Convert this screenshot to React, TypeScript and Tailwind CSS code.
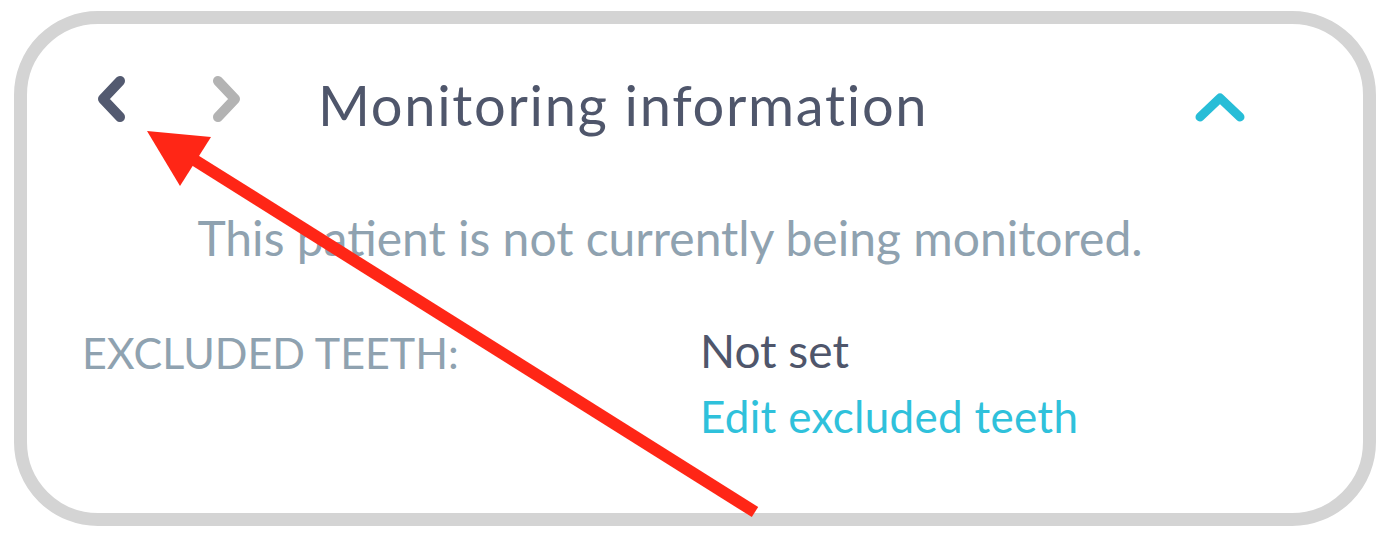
import React from 'react';

const font = { fontFamily: 'Lato, "Open Sans", sans-serif' };

const ChevronLeft: React.FC<{ color: string }> = ({ color }) => (
  <svg width="30" height="46" viewBox="0 0 30 46" fill="none">
    <path d="M24 5 L7 23 L24 41" stroke={color} strokeWidth="10" strokeLinecap="round" strokeLinejoin="round" />
  </svg>
);

const ChevronRight: React.FC<{ color: string }> = ({ color }) => (
  <svg width="30" height="46" viewBox="0 0 30 46" fill="none">
    <path d="M6 5 L23 23 L6 41" stroke={color} strokeWidth="10" strokeLinecap="round" strokeLinejoin="round" />
  </svg>
);

const ChevronUp: React.FC = () => (
  <svg width="50" height="32" viewBox="0 0 50 32" fill="none">
    <path d="M5 26 L25 7 L45 26" stroke="#27bdd7" strokeWidth="9" strokeLinecap="round" strokeLinejoin="round" />
  </svg>
);

// red annotation arrow drawn over the card
const Arrow: React.FC = () => (
  <svg className="absolute inset-0 pointer-events-none" width="1396" height="548" viewBox="0 0 1396 548">
    <line x1="188" y1="156" x2="755" y2="512" stroke="#ff2616" strokeWidth="12" />
    <polygon points="147,131 211,137 180,186" fill="#ff2616" />
  </svg>
);

export default function App() {
  return (
    <div className="relative w-[1396px] h-[548px] bg-white overflow-hidden" style={font}>
      <div className="pt-[11px] pl-[14px]">
        <div className="w-[1362px] h-[515px] rounded-[84px] border-[13px] border-[#d4d4d4] bg-white">
          {/* header */}
          <div className="flex items-center h-[150px] pl-[69px] pr-[118px]">
            <button className="flex">
              <ChevronLeft color="#535a70" />
            </button>
            <button className="flex ml-[86px]">
              <ChevronRight color="#b3b3b3" />
            </button>
            <h1 className="ml-[76px] mt-[12px] text-[56px] leading-none text-[#4f566b] tracking-[1.7px]">
              Monitoring information
            </h1>
            <button className="flex ml-auto mt-[16px]">
              <ChevronUp />
            </button>
          </div>

          <p className="mt-[40px] pr-[50px] text-center text-[48px] leading-none text-[#8fa2b0]">
            This patient is not currently being monitored.
          </p>

          <div className="flex mt-[66px] pl-[55px]">
            <div className="w-[618px] text-[43px] leading-none text-[#8fa2b0] pt-[3px]">EXCLUDED TEETH:</div>
            <div className="flex flex-col gap-[20px]">
              <span className="text-[46px] leading-none text-[#4f566b]">Not set</span>
              <a className="text-[44px] leading-none text-[#2fc1db] tracking-[0.3px]">Edit excluded teeth</a>
            </div>
          </div>
        </div>
      </div>
      <Arrow />
    </div>
  );
}
